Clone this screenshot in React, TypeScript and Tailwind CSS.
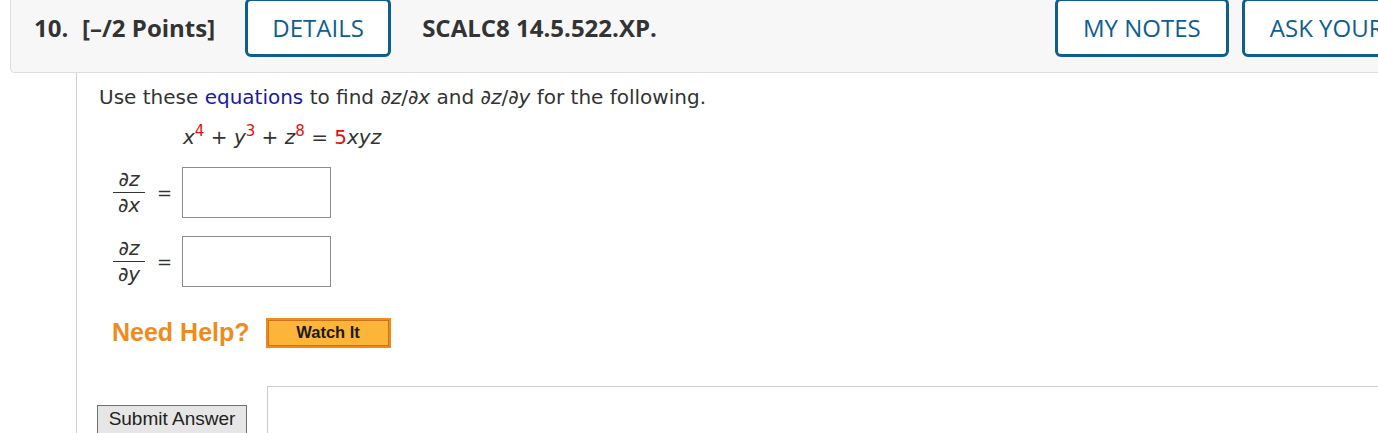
export default function App() {
  const sans = { fontFamily: '"Open Sans", "Liberation Sans", sans-serif' };
  const verdana = { fontFamily: '"DejaVu Sans", Verdana, sans-serif' };
  const arial = { fontFamily: '"Liberation Sans", Arial, sans-serif' };

  const navBtn =
    "h-[59px] border-[3px] border-[#0f5e8e] rounded-[6px] bg-white flex items-center justify-center text-[24px] text-[#0f5e8e]";
  const sup = "text-[#e01010] text-[15px] relative -top-[8px] leading-none";

  return (
    <div className="w-full h-[433px] overflow-hidden bg-white relative">
      {/* question header */}
      <div
        className="ml-[10px] -mt-[10px] h-[83px] bg-[#f7f7f7] border border-[#dedede] rounded-[4px] flex items-start pt-[7px] pl-[23px] whitespace-nowrap w-[1500px]"
        style={sans}
      >
        <div className="h-[59px] flex items-center text-[24px] font-bold text-[#333]">
          <span className="w-[48px]">10.</span>
          <span>[–/2 Points]</span>
        </div>
        <button className={`${navBtn} w-[146px] ml-[30px]`}>DETAILS</button>
        <div className="h-[59px] flex items-center ml-[31px] text-[24px] font-bold text-[#333]">
          SCALC8 14.5.522.XP.
        </div>
        <button className={`${navBtn} w-[174px] ml-[398px]`}>MY NOTES</button>
        <button className={`${navBtn} w-[250px] ml-[13px] justify-start pl-[25px]`}>ASK YOUR TEACHER</button>
      </div>

      {/* question body */}
      <div className="ml-[76px] border-l border-[#d0d0d0] h-[361px] pl-[22px] pt-[11px] text-[#333]" style={verdana}>
        <p className="text-[20px] leading-[26px]">
          Use these <span className="text-[#1a1aa0]">equations</span> to find ∂<i>z</i>/∂<i>x</i> and ∂<i>z</i>/∂<i>y</i> for the following.
        </p>
        <p className="text-[20px] leading-[26px] mt-[14px] ml-[84px]">
          <i>x</i>
          <span className={sup}>4</span> + <i>y</i>
          <span className={sup}>3</span> + <i>z</i>
          <span className={sup}>8</span> = <span className="text-[#e01010]">5</span>
          <i>xyz</i>
        </p>

        <div className="mt-[17px] flex flex-col gap-[18px]">
          {["x", "y"].map((v) => (
            <div key={v} className="flex items-center">
              <div className="ml-[14px] w-[32px] flex flex-col items-center text-[20px] leading-[21px]">
                <span>
                  ∂<i>z</i>
                </span>
                <span className="w-[32px] h-[1px] bg-[#333] my-[2px]" />
                <span>
                  ∂<i>{v}</i>
                </span>
              </div>
              <span className="ml-[12px] text-[18px]">=</span>
              <div className="ml-[10px] w-[149px] h-[51px] border border-[#8c8c8c] bg-white" />
            </div>
          ))}
        </div>

        <div className="mt-[27px] flex items-center ml-[13px]" style={arial}>
          <span className="text-[25px] font-bold text-[#f08a1d]">Need Help?</span>
          <button className="ml-[16px] w-[125px] h-[30px] bg-[#f08a1d] p-[2px] flex">
            <span className="flex-1 bg-[#fdb539] border border-[#c9741a] flex items-center justify-center text-[16.5px] font-bold text-[#1a1a1a]">
              Watch It
            </span>
          </button>
        </div>

        <div className="mt-[34px] flex items-start ml-[-2px]" style={arial}>
          <button className="mt-[19px] w-[150px] h-[29px] bg-[#e6e6e6] border border-[#707070] text-[19px] text-[#222] flex items-center justify-center">
            Submit Answer
          </button>
          <div className="ml-[20px] flex-1 h-[60px] border border-[#cccccc] border-r-0" />
        </div>
      </div>
    </div>
  );
}
